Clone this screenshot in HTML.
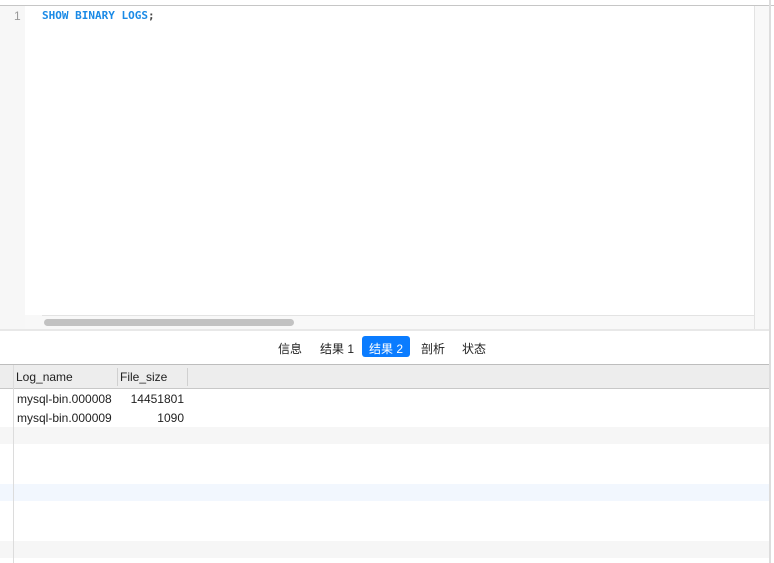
<!DOCTYPE html>
<html><head><meta charset="utf-8"><style>
*{margin:0;padding:0;box-sizing:border-box}
body{width:774px;height:563px;overflow:hidden;background:#fff;font-family:"Liberation Sans","Noto Sans CJK SC",sans-serif;position:relative}
div{position:absolute}
.t{font-size:12px;color:#222;}
</style></head><body>
<div style="left:0;top:5px;width:774px;height:1px;background:#c6c6c6"></div>
<div style="left:0;top:6px;width:25px;height:324px;background:#f7f7f7"></div>
<div style="left:754px;top:6px;width:15px;height:324px;background:#f8f8f8;border-left:1px solid #e3e3e3"></div>
<div style="left:25px;top:315px;width:729px;height:15px;background:#f8f8f8"></div>
<div style="left:42px;top:315px;width:712px;height:1px;background:#e3e3e3"></div>
<div style="left:44px;top:319px;width:250px;height:7px;border-radius:4px;background:#c2c2c2"></div>
<div style="left:0;top:329px;width:769px;height:2px;background:#e8e8e8"></div>
<div style="left:769px;top:0;width:2px;height:563px;background:#ddd"></div>
<div style="left:14px;top:9px;font-family:'Liberation Sans',sans-serif;font-size:12px;color:#999">1</div>
<div style="left:42px;top:9px;font-family:'DejaVu Sans Mono',monospace;font-size:11px;font-weight:bold;color:#1a8ae6">SHOW BINARY LOGS<span style="color:#444">;</span></div>
<div style="left:362px;top:336px;width:48px;height:21px;background:#0a7cff;border-radius:3px"></div>
<div class="t" style="left:278px;top:340px">信息</div>
<div class="t" style="left:320px;top:340px">结果 1</div>
<div class="t" style="left:369px;top:340px;color:#fff">结果 2</div>
<div class="t" style="left:421px;top:340px">剖析</div>
<div class="t" style="left:462px;top:340px">状态</div>
<div style="left:0;top:364px;width:769px;height:25px;background:#ededed;border-top:1px solid #bdbdbd;border-bottom:1px solid #c8c8c8"></div>
<div style="left:117px;top:368px;width:1px;height:18px;background:#d0d0d0"></div>
<div style="left:187px;top:368px;width:1px;height:18px;background:#d0d0d0"></div>
<div class="t" style="left:16px;top:370px">Log_name</div>
<div class="t" style="left:120px;top:370px">File_size</div>
<div style="left:0;top:427px;width:769px;height:17px;background:#f6f6f6"></div>
<div style="left:0;top:484px;width:769px;height:17px;background:#f2f7fe"></div>
<div style="left:0;top:541px;width:769px;height:17px;background:#f6f6f6"></div>
<div style="left:13px;top:365px;width:1px;height:198px;background:#dcdcdc"></div>
<div class="t" style="left:17px;top:392px">mysql-bin.000008</div>
<div class="t" style="left:110px;top:392px;width:74px;text-align:right">14451801</div>
<div class="t" style="left:17px;top:411px">mysql-bin.000009</div>
<div class="t" style="left:110px;top:411px;width:74px;text-align:right">1090</div>
</body></html>
